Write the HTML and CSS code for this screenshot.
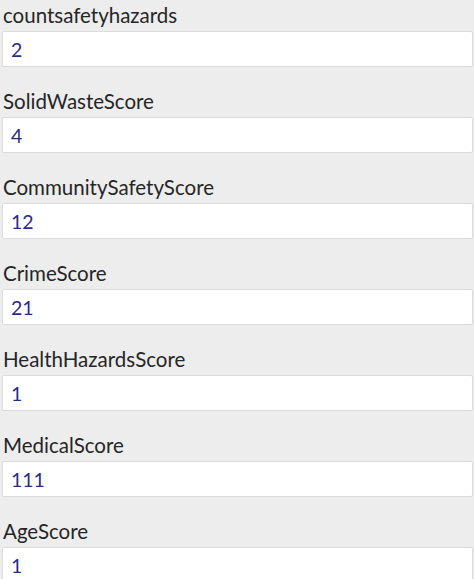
FILE: index.html
```html
<!DOCTYPE html>
<html>
<head>
<meta charset="utf-8">
<link rel="stylesheet" href="styles.css">
</head>
<body>
<div class="form">
  <div class="field"><div class="label">countsafetyhazards</div><div class="box">2</div></div>
  <div class="field"><div class="label">SolidWasteScore</div><div class="box">4</div></div>
  <div class="field"><div class="label">CommunitySafetyScore</div><div class="box">12</div></div>
  <div class="field"><div class="label">CrimeScore</div><div class="box">21</div></div>
  <div class="field"><div class="label">HealthHazardsScore</div><div class="box">1</div></div>
  <div class="field"><div class="label">MedicalScore</div><div class="box">111</div></div>
  <div class="field"><div class="label">AgeScore</div><div class="box">1</div></div>
</div>
</body>
</html>
```
FILE: styles.css
```css
html, body {
  margin: 0;
  padding: 0;
  background: #ededed;
  overflow: hidden;
}
.form {
  display: flex;
  flex-direction: column;
  gap: 19px;
  padding-left: 2px;
  padding-right: 1px;
  font-family: "Lato", "Open Sans", sans-serif;
}
.field {
  display: flex;
  flex-direction: column;
}
.label {
  height: 31px;
  line-height: 30px;
  font-size: 20.5px;
  color: #262626;
  padding-left: 1px;
}
.box {
  box-sizing: border-box;
  height: 36px;
  background: #fff;
  border: 1px solid #dcdcdc;
  border-radius: 2px;
  padding-left: 8px;
  line-height: 35px;
  font-size: 19.5px;
  color: #2b2a8c;
}
```
